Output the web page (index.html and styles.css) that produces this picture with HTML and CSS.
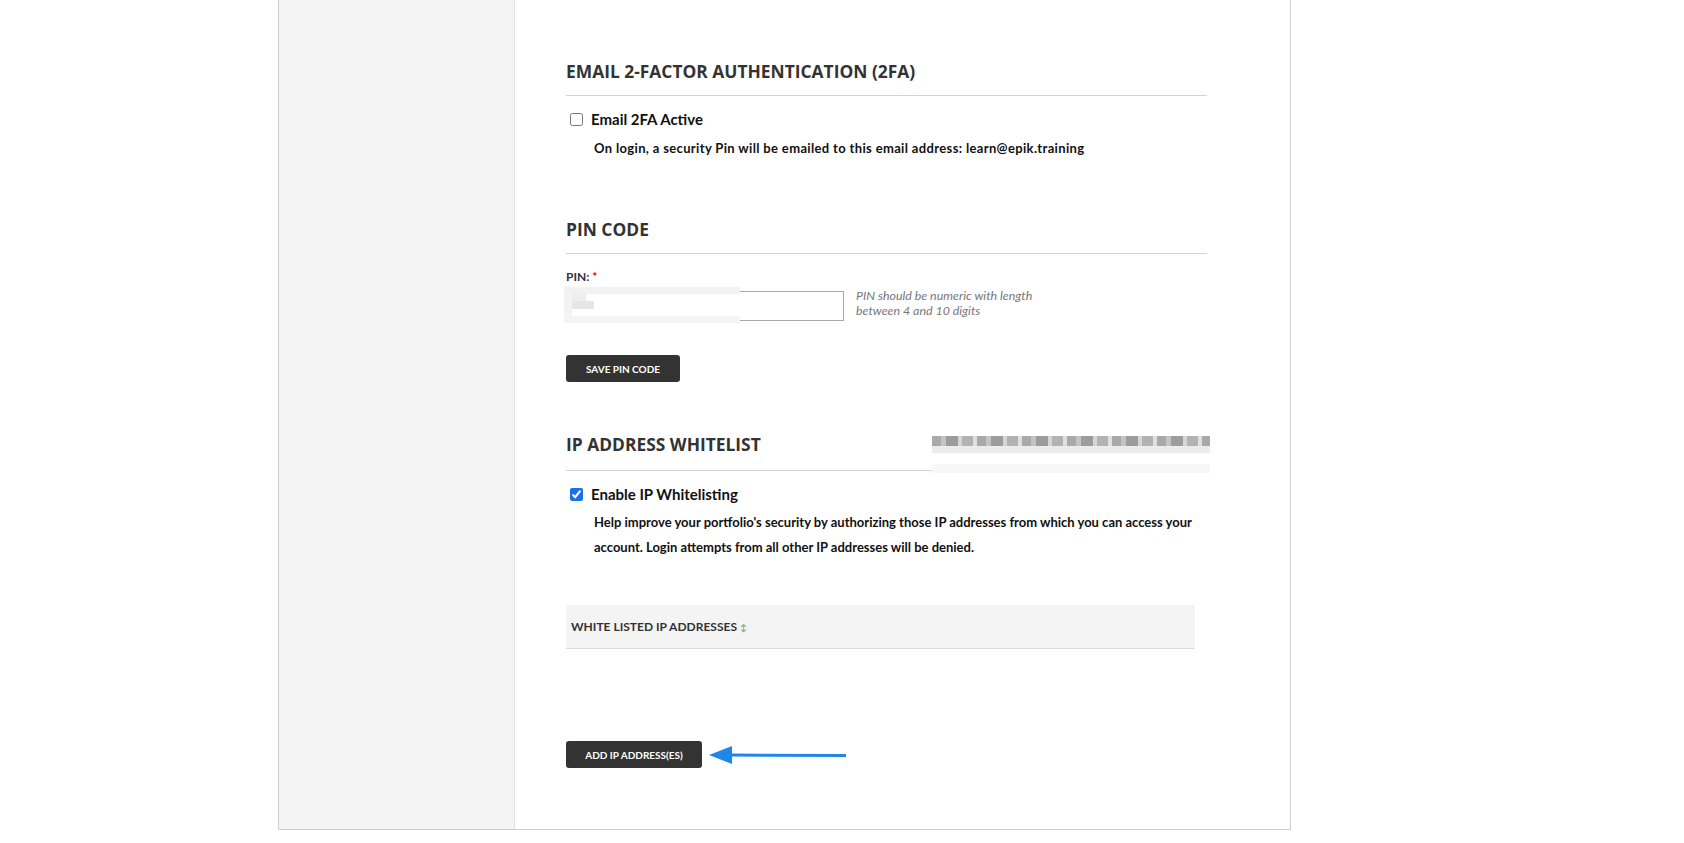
FILE: index.html
```html
<!DOCTYPE html>
<html lang="en">
<head>
  <meta charset="UTF-8" />
  <meta name="viewport" content="width=device-width, initial-scale=1.0" />
  <title>Account Security</title>
  <link rel="stylesheet" href="styles.css">
</head>
<body>
  <div class="frame">
    <aside class="sidebar"></aside>

    <main class="content">
      <!-- Email 2FA -->
      <section class="block block-first">
        <h2 class="section-title">Email 2-Factor Authentication (2FA)</h2>
        <label class="check-row">
          <input type="checkbox" />
          <span>Email 2FA Active</span>
        </label>
        <p class="note">On login, a security Pin will be emailed to this email address: learn@epik.training</p>
      </section>

      <!-- Pin code -->
      <section class="block">
        <h2 class="section-title">PIN Code</h2>
        <label class="field-label" for="pin">PIN: <span class="req">*</span></label>
        <div class="field-row">
          <div class="input-wrap">
            <input type="password" id="pin" class="pin-input" />
            <div class="blur-patch"></div>
          </div>
          <p class="hint">PIN should be numeric with length<br>between 4 and 10 digits</p>
        </div>
        <button class="btn btn-save">Save PIN Code</button>
      </section>

      <!-- IP whitelist -->
      <section class="block block-ip">
        <div class="title-wrap">
          <h2 class="section-title">IP Address Whitelist</h2>
          <div class="blur-strip"></div>
        </div>
        <label class="check-row">
          <input type="checkbox" checked />
          <span>Enable IP Whitelisting</span>
        </label>
        <p class="note note-wide">Help improve your portfolio's security by authorizing those IP addresses from which you can access your account. Login attempts from all other IP addresses will be denied.</p>

        <table class="ip-table">
          <thead>
            <tr><th>White Listed IP Addresses <span class="sort">&#8597;</span></th></tr>
          </thead>
        </table>

        <div class="action-row">
          <button class="btn btn-add">Add IP Address(es)</button>
          <svg class="pointer" width="138" height="20" viewBox="0 0 138 20">
            <line x1="20" y1="10" x2="137" y2="10.6" stroke="#1f87ea" stroke-width="3" />
            <polygon points="0,10 23,1 23,19" fill="#1f87ea" />
          </svg>
        </div>
      </section>
    </main>
  </div>
</body>
</html>
```

FILE: styles.css
```css
body {
  margin: 0;
  background: #fff;
  font-family: Lato, "Liberation Sans", sans-serif;
  color: #111;
}
.frame {
  display: flex;
  width: 1011px;
  height: 829px;
  margin-left: 278px;
  border: 1px solid #cfcfcf;
  border-top: none;
}
.sidebar {
  width: 235px;
  background: #f4f4f4;
  border-right: 1px solid #e2e2e2;
}
.content {
  flex: 1;
  padding: 0 83px 0 51px;
}
/* Sections */
.block {
  padding-top: 59px;
}
.block-ip {
  padding-top: 50px;
}
.section-title {
  margin: 0;
  font-family: "Open Sans", sans-serif;
  font-size: 17.4px;
  font-weight: 700;
  line-height: 24px;
  text-transform: uppercase;
  color: #333;
  padding-bottom: 12px;
  border-bottom: 1px solid #d4d4d4;
}
.block-ip .section-title {
  padding-bottom: 14px;
}
.check-row {
  display: flex;
  align-items: center;
  margin-top: 13px;
  height: 20px;
  font-size: 15px;
  font-weight: 700;
  color: #111;
}
.check-row input {
  width: 13px;
  height: 13px;
  margin: 0 8px 0 4px;
  accent-color: #1a6fe8;
}
.note {
  margin: 9px 0 0 28px;
  font-size: 13px;
  font-weight: 700;
  line-height: 20px;
  letter-spacing: 0.35px;
}
.note-wide {
  margin-top: 6px;
  line-height: 25px;
  letter-spacing: 0;
  max-width: 612px;
}
/* PIN field */
.field-label {
  display: block;
  margin-top: 15px;
  font-size: 12px;
  font-weight: 700;
  line-height: 16px;
  color: #2d3340;
}
.req {
  color: #d0021b;
}
.field-row {
  display: flex;
  align-items: flex-start;
  margin-top: 6px;
}
.input-wrap {
  position: relative;
}
.pin-input {
  display: block;
  width: 278px;
  height: 30px;
  box-sizing: border-box;
  border: 1px solid #a9a9a9;
  border-radius: 0;
  padding: 0 6px;
}
.blur-patch {
  position: absolute;
  left: -2px;
  top: -4px;
  width: 176px;
  height: 36px;
  background:
    linear-gradient(#e6e6e6, #e6e6e6) 8px 14px / 22px 8px no-repeat,
    linear-gradient(#eeeeee, #eeeeee) 8px 6px / 14px 8px no-repeat,
    linear-gradient(#f2f2f2, #f2f2f2) 0 0 / 100% 7px no-repeat,
    linear-gradient(#f4f4f4, #f4f4f4) 0 29px / 100% 7px no-repeat,
    linear-gradient(to right, #f3f3f3 8px, #fff 8px);
}
.hint {
  margin: -3px 0 0 12px;
  font-size: 12.4px;
  font-style: italic;
  line-height: 15px;
  color: #777;
}
/* Buttons */
.btn {
  display: block;
  height: 27px;
  border: none;
  border-radius: 3px;
  background: #333;
  color: #fff;
  font-family: Lato, "Liberation Sans", sans-serif;
  font-size: 10px;
  font-weight: 700;
  text-transform: uppercase;
  cursor: pointer;
}
.btn-save {
  width: 114px;
  margin-top: 34px;
}
.btn-add {
  width: 136px;
}
/* IP whitelist */
.title-wrap {
  position: relative;
}
.blur-strip {
  position: absolute;
  left: 366px;
  top: 4px;
  width: 278px;
  height: 37px;
  background:
    repeating-linear-gradient(to right, #a9a9a9 0 9px, #c4c4c4 9px 14px, #9c9c9c 14px 26px, #d6d6d6 26px 30px, #b3b3b3 30px 41px, #e0e0e0 41px 45px) 0 0 / 100% 10px no-repeat,
    linear-gradient(#ececec, #ececec) 0 10px / 100% 7px no-repeat,
    linear-gradient(#f7f7f7, #f7f7f7) 0 28px / 100% 9px no-repeat,
    #fff;
}
.ip-table {
  width: 629px;
  margin-top: 45px;
  border-collapse: collapse;
}
.ip-table th {
  height: 43px;
  padding: 0 5px;
  text-align: left;
  background: #f4f4f4;
  border-bottom: 1px solid #dcdcdc;
  font-size: 12px;
  font-weight: 700;
  text-transform: uppercase;
  color: #333;
}
.sort {
  color: #999;
  font-size: 9px;
}
.action-row {
  display: flex;
  align-items: center;
  gap: 7px;
  margin-top: 92px;
}
.pointer {
  display: block;
}
```
